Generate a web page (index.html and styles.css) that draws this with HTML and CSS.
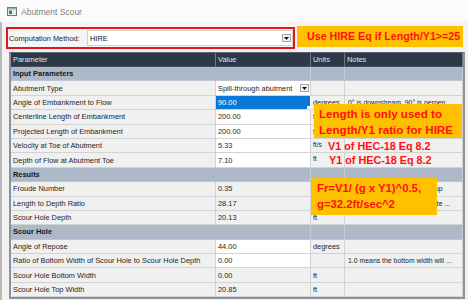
FILE: index.html
```html
<!DOCTYPE html>
<html>
<head>
<meta charset="utf-8">
<link rel="stylesheet" href="styles.css">
</head>
<body>
<div class="win">
  <div class="titlebar">
    <svg class="appicon" width="10" height="9" viewBox="0 0 10 9">
      <rect x="0.5" y="0.5" width="9" height="8" fill="#e8ecee" stroke="#6b7a80"/>
      <rect x="1" y="1" width="8" height="1.5" fill="#9fb0b8"/>
      <rect x="2" y="3.5" width="3" height="3.5" fill="#2f8a5a"/>
    </svg>
    <span class="title">Abutment Scour</span>
  </div>
  <div class="content">
    <div class="method-row">
      <div class="method-box">
        <span class="lbl">Computation Method:</span>
        <div class="combo">
          <span class="combo-text">HIRE</span>
          <span class="dd"><svg width="5" height="3" viewBox="0 0 5 3"><polygon points="0,0 5,0 2.5,3" fill="#111"/></svg></span>
        </div>
      </div>
      <div class="callout callout-top">Use HIRE Eq if Length/Y1&gt;=25</div>
    </div>

    <div class="grid">
      <div class="row hdr"><div class="c">Parameter</div><div class="c">Value</div><div class="c">Units</div><div class="c">Notes</div></div>

      <div class="row sec"><div class="c">Input Parameters</div><div class="c"></div><div class="c"></div><div class="c"></div></div>
      <div class="row"><div class="c">Abutment Type</div><div class="c v combo-cell"><span>Spill-through abutment</span><span class="dd"><svg width="5" height="3" viewBox="0 0 5 3"><polygon points="0,0 5,0 2.5,3" fill="#111"/></svg></span></div><div class="c"></div><div class="c"></div></div>
      <div class="row"><div class="c">Angle of Embankment to Flow</div><div class="c sel">90.00</div><div class="c">degrees</div><div class="c n">0° is downstream, 90° is perpen…</div></div>
      <div class="row"><div class="c">Centerline Length of Embankment</div><div class="c v">200.00</div><div class="c">ft</div><div class="c"></div></div>
      <div class="row"><div class="c">Projected Length of Embankment</div><div class="c v">200.00</div><div class="c">ft</div><div class="c"></div></div>
      <div class="row"><div class="c">Velocity at Toe of Abutment</div><div class="c v">5.33</div><div class="c u">ft/s</div><div class="c"></div></div>
      <div class="row"><div class="c">Depth of Flow at Abutment Toe</div><div class="c v">7.10</div><div class="c u">ft</div><div class="c"></div></div>

      <div class="row sec"><div class="c">Results</div><div class="c"></div><div class="c"></div><div class="c"></div></div>
      <div class="row"><div class="c">Froude Number</div><div class="c">0.35</div><div class="c"></div><div class="c n">Used in a HIRE equation setup</div></div>
      <div class="row"><div class="c">Length to Depth Ratio</div><div class="c">28.17</div><div class="c"></div><div class="c n">To check if HIRE is appropriate ...</div></div>
      <div class="row"><div class="c">Scour Hole Depth</div><div class="c">20.13</div><div class="c">ft</div><div class="c"></div></div>

      <div class="row sec"><div class="c">Scour Hole</div><div class="c"></div><div class="c"></div><div class="c"></div></div>
      <div class="row"><div class="c">Angle of Repose</div><div class="c v">44.00</div><div class="c">degrees</div><div class="c"></div></div>
      <div class="row"><div class="c">Ratio of Bottom Width of Scour Hole to Scour Hole Depth</div><div class="c v">0.00</div><div class="c"></div><div class="c n">1.0 means the bottom width will ...</div></div>
      <div class="row"><div class="c">Scour Hole Bottom Width</div><div class="c">0.00</div><div class="c">ft</div><div class="c"></div></div>
      <div class="row"><div class="c">Scour Hole Top Width</div><div class="c">20.85</div><div class="c">ft</div><div class="c"></div></div>
    </div>
  </div>

  <div class="callout callout-mid">Length is only used to<br>Length/Y1 ratio for HIRE</div>
  <div class="redtext rt-v1">V1 of HEC-18 Eq 8.2</div>
  <div class="redtext rt-y1">Y1 of HEC-18 Eq 8.2</div>
  <div class="callout callout-low">Fr=V1/ (g x Y1)^0.5,<br>g=32.2ft/sec^2</div>
</div>
</body>
</html>
```

FILE: styles.css
```css
* { box-sizing: border-box; }
html, body { margin: 0; padding: 0; background: #ffffff; }
body { font-family: "Liberation Sans", Arial, sans-serif; }

.win {
  position: relative;
  width: 468px;
  height: 300px;
  overflow: hidden;
  background: #f3f3f3;
}

.titlebar {
  height: 22px;
  background: #fbfbfb;
  display: flex;
  align-items: center;
  padding-left: 7px;
  padding-top: 1px;
}
.appicon { display: block; }
.title {
  margin-left: 4px;
  font-size: 8.5px;
  color: #7c7c7c;
}

.content {
  height: 278px;
  border-left: 2px solid #b9b9b9;
  padding-left: 4px;
}

.method-row {
  display: flex;
  align-items: flex-start;
  padding-top: 5px;
}
.method-box {
  width: 289px;
  height: 22px;
  border: 2px solid #e8141c;
  display: flex;
  align-items: center;
  padding-left: 1px;
  background: #f5f5f5;
}
.lbl {
  font-size: 7.4px;
  color: #1e1e1e;
  width: 78px;
}
.combo {
  width: 206px;
  height: 16px;
  background: #ffffff;
  border: 1px solid #d0d0d0;
  display: flex;
  align-items: center;
  justify-content: space-between;
  padding: 0 1px 0 2px;
}
.combo-text { font-size: 7.4px; color: #111; }
.dd {
  width: 9px;
  height: 8px;
  border: 1px solid #a5a5a5;
  background: #f4f4f4;
  display: flex;
  align-items: center;
  justify-content: center;
}
.dd svg { display: block; }

.callout {
  background: #ffc000;
  color: #ff1010;
  font-weight: bold;
}
.callout-top {
  width: 166px;
  height: 21px;
  margin-left: 2px;
  margin-top: -1px;
  font-size: 10.7px;
  line-height: 21px;
  padding-left: 10px;
  white-space: nowrap;
}

.grid {
  margin-top: 3px;
  margin-left: 3px;
  width: 456px;
  border: 2px solid #8b929b;
  border-top: 1px solid #5b6470;
  background: #f0f0f0;
}
.row {
  display: grid;
  grid-template-columns: 205px 95px 34px 118px;
  height: 14.4px;
}
.c {
  font-size: 7.4px;
  color: #1e1e1e;
  white-space: nowrap;
  overflow: hidden;
  padding-left: 2px;
  display: flex;
  align-items: center;
  background: #f0f0f0;
  border-right: 1px solid #d3d3d3;
  border-bottom: 1px solid #d3d3d3;
}
.c.v { background: #ffffff; }
.c.n { font-size: 6.9px; padding-left: 3px; }
.c.u { font-size: 6.6px; align-items: flex-start; padding-top: 2px; }

.hdr { height: 14px; }
.hdr .c {
  background: #2e3947;
  color: #e2e6ea;
  border-right: 1px solid #6f7885;
  border-bottom: 1px solid #48525f;
}
.sec .c {
  background: #adb9c9;
  font-weight: bold;
  color: #151515;
  border-right: 1px solid #c3cbd6;
  border-bottom: 1px solid #bcc5d1;
}
.sec .c:first-child { border-right-color: #adb9c9; }

.combo-cell {
  justify-content: space-between;
  padding-right: 1px;
}
.sel {
  position: relative;
  background: #0a78d7;
  color: #ffffff;
  border-right: 1px solid #ffffff;
}
.sel::after {
  content: "";
  position: absolute;
  right: 0;
  bottom: 0;
  width: 3px;
  height: 3px;
  background: #ffffff;
}

.callout-mid {
  position: absolute;
  left: 314px;
  top: 104px;
  width: 148px;
  height: 34px;
  font-size: 11.6px;
  line-height: 16px;
  padding: 2px 0 0 5px;
  white-space: nowrap;
}
.redtext {
  position: absolute;
  color: #ff1010;
  font-weight: bold;
  font-size: 10.8px;
  white-space: nowrap;
}
.rt-v1 { left: 328px; top: 140px; }
.rt-y1 { left: 329px; top: 154px; }
.callout-low {
  position: absolute;
  left: 311px;
  top: 178px;
  width: 126px;
  height: 37px;
  font-size: 11.3px;
  line-height: 15.5px;
  padding: 3px 0 0 6px;
  white-space: nowrap;
}
```
